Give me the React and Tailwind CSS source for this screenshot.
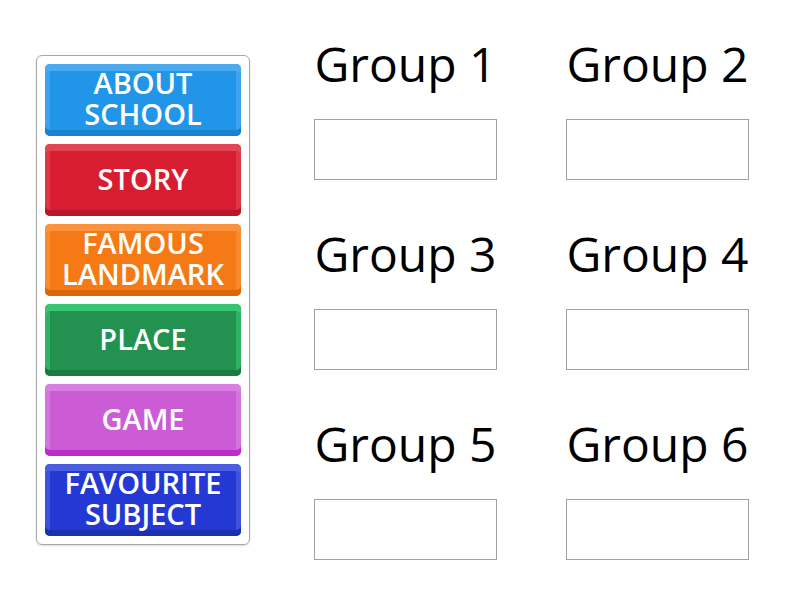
import React from 'react';

const buttons = [
  {
    label: ['ABOUT', 'SCHOOL'],
    cls: 'bg-[#2196e9] shadow-[inset_0_-6px_0_#1a80cf,inset_0_7px_0_#4eaaef,inset_5px_0_0_#3fa2ee,inset_-5px_0_0_#3fa2ee]',
  },
  {
    label: ['STORY'],
    cls: 'bg-[#d81d31] shadow-[inset_0_-6px_0_#b8182a,inset_0_7px_0_#e24553,inset_5px_0_0_#de3646,inset_-5px_0_0_#de3646]',
  },
  {
    label: ['FAMOUS', 'LANDMARK'],
    cls: 'bg-[#f57a15] shadow-[inset_0_-6px_0_#db660b,inset_0_7px_0_#fc9340,inset_5px_0_0_#fa8a2e,inset_-5px_0_0_#fa8a2e]',
  },
  {
    label: ['PLACE'],
    cls: 'bg-[#23914f] shadow-[inset_0_-6px_0_#1c7a41,inset_0_7px_0_#37c56f,inset_5px_0_0_#2fb263,inset_-5px_0_0_#2fb263]',
  },
  {
    label: ['GAME'],
    cls: 'bg-[#cc5cd6] shadow-[inset_0_-6px_0_#bb2dc8,inset_0_7px_0_#d880e1,inset_5px_0_0_#d474dd,inset_-5px_0_0_#d474dd]',
  },
  {
    label: ['FAVOURITE', 'SUBJECT'],
    cls: 'bg-[#2439d3] shadow-[inset_0_-6px_0_#1e2fae,inset_0_7px_0_#4b5ee0,inset_5px_0_0_#4052dc,inset_-5px_0_0_#4052dc]',
  },
];

const groups = ['Group 1', 'Group 2', 'Group 3', 'Group 4', 'Group 5', 'Group 6'];

export default function App() {
  return (
    <div className="flex h-[600px] w-[800px] bg-white font-['Open_Sans',sans-serif]">
      {/* word bank */}
      <div className="ml-[36px] mt-[55px] flex h-[490px] w-[214px] flex-col gap-[8px] rounded-[6px] border border-[#a8a8a8] px-[8px] py-[8px] shadow-[0_1px_2px_rgba(0,0,0,0.15)]">
        {buttons.map((b) => (
          <div
            key={b.label.join(' ')}
            className={`flex h-[72px] w-[196px] flex-col items-center justify-center rounded-[5px] pb-[4px] text-[29px] font-semibold leading-[31px] text-white ${b.cls}`}
          >
            {b.label.map((line) => (
              <span key={line}>{line}</span>
            ))}
          </div>
        ))}
      </div>

      {/* groups */}
      <div className="ml-[64px] mt-[40px] grid grid-cols-[183px_183px] gap-x-[69px] gap-y-[50px] self-start">
        {groups.map((g) => (
          <div key={g} className="flex flex-col items-center">
            <div className="h-[48px] text-[48px] leading-[48px] text-black">{g}</div>
            <div className="mt-[31px] h-[61px] w-[183px] border border-[#a0a0a0] bg-white" />
          </div>
        ))}
      </div>
    </div>
  );
}
